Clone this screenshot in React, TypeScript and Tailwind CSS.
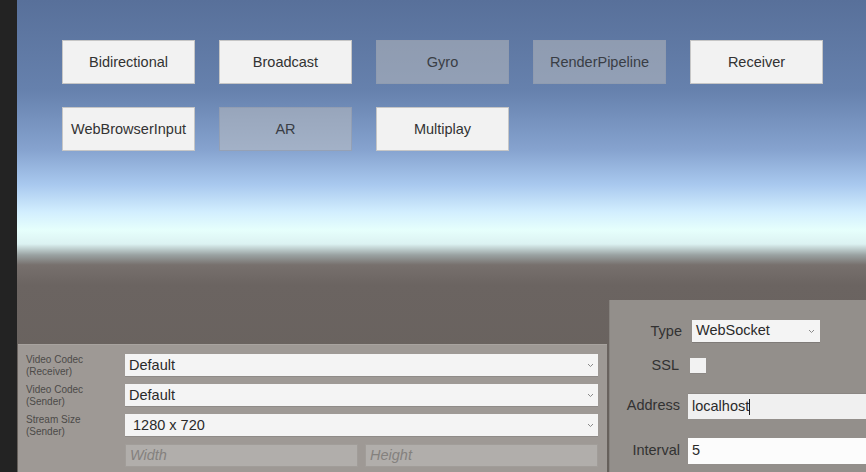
import React from "react";

const buttons: { label: string; disabled?: boolean }[] = [
  { label: "Bidirectional" },
  { label: "Broadcast" },
  { label: "Gyro", disabled: true },
  { label: "RenderPipeline", disabled: true },
  { label: "Receiver" },
  { label: "WebBrowserInput" },
  { label: "AR", disabled: true },
  { label: "Multiplay" },
];

const codecRows = [
  { top: "Video Codec", bottom: "(Receiver)", value: "Default", indent: "pl-[4px]" },
  { top: "Video Codec", bottom: "(Sender)", value: "Default", indent: "pl-[4px]" },
  { top: "Stream Size", bottom: "(Sender)", value: "1280 x 720", indent: "pl-[8px]" },
];

const Arrow = () => (
  <svg width="7" height="5" viewBox="0 0 7 5" className="shrink-0">
    <path d="M1 1 L3.5 3.5 L6 1" fill="none" stroke="#8a8a8a" strokeWidth="1" />
  </svg>
);

export default function App() {
  return (
    <div
      className="w-[866px] h-[472px] flex overflow-hidden"
      style={{ fontFamily: '"Liberation Sans", Arial, sans-serif' }}
    >
      {/* editor strip */}
      <div className="w-[17px] shrink-0 bg-[#232323]" />

      {/* game view */}
      <div className="flex-1 flex flex-col bg-[linear-gradient(to_bottom,#58709a_0px,#6681ad_90px,#86a3cf_150px,#a9c9ef_185px,#d2eefe_212px,#e6fffc_230px,#dcf2f2_244px,#9aa2a2_255px,#77706d_265px,#6b6461_285px,#66605b_472px)]">
        {/* scene buttons */}
        <div className="pt-[40px] pl-[45px] grid grid-cols-[repeat(5,133px)] gap-x-[24px] gap-y-[23px]">
          {buttons.map((b) => (
            <div
              key={b.label}
              className={`h-[44px] pt-px flex items-center justify-center text-[14.5px] border ${
                b.disabled
                  ? "bg-[#c0c0c0]/50 border-[#8f9aae]/70 text-[#393d45]"
                  : "bg-[#f2f2f2] border-[#c6c6c6] text-[#333333]"
              }`}
            >
              {b.label}
            </div>
          ))}
        </div>

        <div className="flex-1" />

        {/* bottom panels */}
        <div className="flex items-end gap-[2px]">
          {/* codec settings */}
          <div className="ml-px w-[589px] h-[128px] bg-[#9e9995] border-t border-[#a8a39f] pt-[9px] pl-[8px] pr-[9px] flex flex-col gap-[7px]">
            {codecRows.map((r, i) => (
              <div key={i} className="flex items-center h-[23px]">
                <div className="w-[99px] shrink-0 text-[10px] leading-[12px] text-[#4c4a48]">
                  <div>{r.top}</div>
                  <div>{r.bottom}</div>
                </div>
                <div
                  className={`flex-1 h-[23px] pt-px bg-[#f4f4f4] border-b border-[#8f8b88] flex items-center justify-between pr-[4px] ${r.indent}`}
                >
                  <span className="text-[14.5px] text-[#2a2a2a]">{r.value}</span>
                  <Arrow />
                </div>
              </div>
            ))}
            <div className="flex items-center h-[23px]">
              <div className="w-[99px] shrink-0" />
              <div className="flex-1 flex gap-[7px]">
                <div className="flex-1 h-[23px] bg-[#b1aeab] border border-[#a19d99] flex items-center pl-[4px] italic text-[14.5px] text-[#84817e]">
                  Width
                </div>
                <div className="flex-1 h-[23px] bg-[#b1aeab] border border-[#a19d99] flex items-center pl-[4px] italic text-[14.5px] text-[#84817e]">
                  Height
                </div>
              </div>
            </div>
          </div>

          {/* signaling settings */}
          <div className="flex-1 h-[172px] bg-[#938f8b] border-l border-[#86827e] pt-[20px] text-[14.5px] text-[#323232]">
            <div className="flex items-center h-[23px]">
              <div className="w-[72px] text-right">Type</div>
              <div className="ml-[10px] w-[128px] h-[23px] bg-[#f4f4f4] border-b border-[#7f7b78] flex items-center justify-between pl-[4px] pr-[5px]">
                <span className="text-[#2a2a2a]">WebSocket</span>
                <Arrow />
              </div>
            </div>
            <div className="flex items-center h-[16px] mt-[15px]">
              <div className="w-[69px] text-right">SSL</div>
              <div className="ml-[11px] w-[16px] h-[16px] bg-[#f2f2f2] border-b border-[#8a8683]" />
            </div>
            <div className="flex items-center h-[26px] mt-[19px]">
              <div className="w-[70px] text-right">Address</div>
              <div className="ml-[8px] flex-1 h-[26px] bg-[#f0f0f0] border-t border-[#8a8683] flex items-center pl-[4px]">
                <span className="text-[#2a2a2a]">localhost</span>
                <span className="w-px h-[16px] bg-[#1a1a1a]" />
              </div>
            </div>
            <div className="flex items-center h-[26px] mt-[19px]">
              <div className="w-[70px] text-right">Interval</div>
              <div className="ml-[8px] flex-1 h-[26px] bg-[#fcfcfc] flex items-center pl-[4px]">
                <span className="text-[#2a2a2a]">5</span>
              </div>
            </div>
          </div>
        </div>
      </div>
    </div>
  );
}
